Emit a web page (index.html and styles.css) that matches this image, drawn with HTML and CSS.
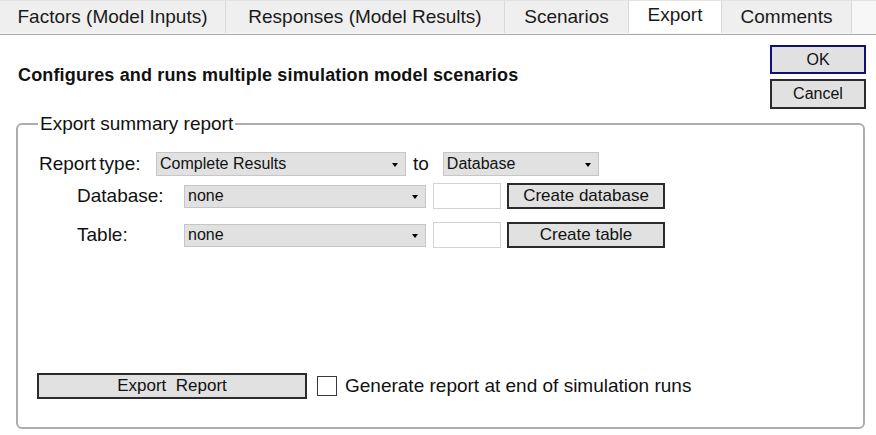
FILE: index.html
```html
<!DOCTYPE html>
<html lang="en">

<head>
    <meta charset="UTF-8">
    <meta name="viewport" content="width=device-width, initial-scale=1.0">
    <title>Experiment - Export</title>
    <link rel="stylesheet" href="styles.css">
</head>

<body>

    <!-- Tab strip -->
    <div class="tabs">
        <div class="tab tab-factors">Factors (Model Inputs)</div>
        <div class="tab tab-responses">Responses (Model Results)</div>
        <div class="tab tab-scenarios">Scenarios</div>
        <div class="tab tab-export active">Export</div>
        <div class="tab tab-comments">Comments</div>
    </div>

    <!-- Title & dialog buttons -->
    <div class="header">
        <h1 class="title">Configures and runs multiple simulation model scenarios</h1>
        <div class="dialog-buttons">
            <button class="btn btn-ok">OK</button>
            <button class="btn btn-cancel">Cancel</button>
        </div>
    </div>

    <!-- Export group -->
    <fieldset class="group">
        <legend>Export summary report</legend>

        <div class="row row-type">
            <span class="label label-type">Report type:</span>
            <div class="dropdown dropdown-type">
                <span>Complete Results</span>
                <i class="caret"></i>
            </div>
            <span class="to">to</span>
            <div class="dropdown dropdown-target">
                <span>Database</span>
                <i class="caret"></i>
            </div>
        </div>

        <div class="row row-sub">
            <span class="label label-sub">Database:</span>
            <div class="dropdown dropdown-sub">
                <span>none</span>
                <i class="caret"></i>
            </div>
            <input class="textbox" type="text">
            <button class="btn btn-create">Create database</button>
        </div>

        <div class="row row-sub row-table">
            <span class="label label-sub">Table:</span>
            <div class="dropdown dropdown-sub">
                <span>none</span>
                <i class="caret"></i>
            </div>
            <input class="textbox" type="text">
            <button class="btn btn-create">Create table</button>
        </div>

        <div class="row row-export">
            <button class="btn btn-export">Export&nbsp; Report</button>
            <label class="check">
                <span class="box"></span>
                Generate report at end of simulation runs
            </label>
        </div>
    </fieldset>

</body>

</html>
```

FILE: styles.css
```css
/* Page */
body {
    margin: 0;
    background-color: #ffffff;
    font-family: "Liberation Sans", Arial, sans-serif;
    color: #111111;
}

/* Tab strip */
.tabs {
    display: flex;
    height: 33px;
    background-color: #f7f7f7;
    border-top: 1px solid #e3e3e3;
    border-bottom: 1px solid #a9a9a9;
    box-sizing: content-box;
}

.tab {
    box-sizing: border-box;
    height: 32px;
    line-height: 32px;
    font-size: 19px;
    text-align: center;
    background-color: #efefef;
    border-right: 1px solid #d9d9d9;
    color: #1a1a1a;
}

.tab-factors { width: 226px; }
.tab-responses { width: 279px; }
.tab-scenarios { width: 124px; }
.tab-export { width: 93px; }
.tab-comments { width: 130px; }

.tab.active {
    background-color: #ffffff;
    line-height: 28px;
}

/* Title & OK / Cancel */
.header {
    display: flex;
    justify-content: space-between;
    padding: 10px 10px 0 18px;
}

.title {
    margin: 20px 0 0 0;
    font-size: 18px;
    line-height: 20px;
    font-weight: bold;
    letter-spacing: 0.15px;
}

.dialog-buttons {
    display: flex;
    flex-direction: column;
    gap: 5px;
}

/* Buttons */
.btn {
    box-sizing: border-box;
    margin: 0;
    padding: 0;
    background-color: #e1e1e1;
    border: 2px solid #2b2b2b;
    font-family: "Liberation Sans", Arial, sans-serif;
    font-size: 17px;
    color: #111111;
}

.btn-ok,
.btn-cancel {
    width: 96px;
    height: 30px;
    font-size: 16px;
}

.btn-ok {
    height: 29px;
    border-color: #10107a;
}

/* Group box */
.group {
    margin: 5px 11px 0 16px;
    padding: 0 0 28px 0;
    border: 2px solid #adadad;
    border-radius: 6px;
}

.group legend {
    margin-left: 20px;
    padding: 0 2px;
    font-size: 19px;
    line-height: 20px;
}

/* Form rows */
.row {
    display: flex;
    align-items: center;
    height: 26px;
    font-size: 19px;
}

.row-type {
    margin-top: 17px;
    padding-left: 21px;
}

.row-sub {
    margin-top: 6px;
    padding-left: 59px;
}

.row-table {
    margin-top: 13px;
}

.label-type {
    width: 117px;
    word-spacing: -2px;
}

.label-sub {
    width: 107px;
}

.to {
    margin: 0 14px 0 7px;
}

/* Drop-down boxes */
.dropdown {
    box-sizing: border-box;
    display: flex;
    align-items: center;
    justify-content: space-between;
    height: 24px;
    padding: 0 7px 0 3px;
    background-color: #e1e1e1;
    border: 1px solid #c6c6c6;
    font-size: 16px;
}

.dropdown-type { width: 250px; }
.dropdown-target { width: 156px; }

.dropdown-sub {
    width: 242px;
    height: 23px;
}

.caret {
    width: 0;
    height: 0;
    border-left: 3px solid transparent;
    border-right: 3px solid transparent;
    border-top: 4px solid #000000;
    margin-top: 2px;
}

/* Text boxes */
.textbox {
    box-sizing: border-box;
    width: 68px;
    height: 26px;
    margin: 0 6px 0 7px;
    padding: 0;
    border: 1px solid #d2d2d2;
    background-color: #ffffff;
}

.btn-create {
    width: 158px;
    height: 26px;
}

/* Export row */
.row-export {
    margin-top: 125px;
    padding-left: 19px;
}

.btn-export {
    width: 270px;
    height: 26px;
}

.check {
    display: flex;
    align-items: center;
    margin-left: 10px;
}

.box {
    box-sizing: border-box;
    width: 20px;
    height: 20px;
    margin-right: 8px;
    border: 1px solid #3a3a3a;
    background-color: #ffffff;
}
```
